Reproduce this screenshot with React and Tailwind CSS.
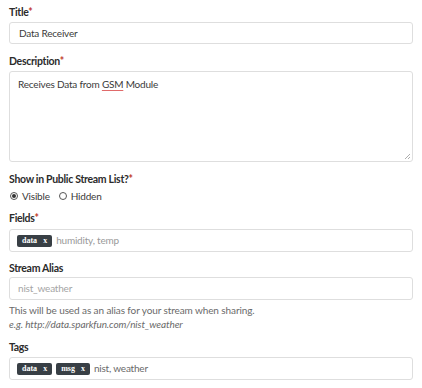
import React from 'react'

const sans = { fontFamily: 'Lato, "Liberation Sans", sans-serif' }

function Label({ children, required, className = '' }) {
  return (
    <div className={`h-4 leading-4 text-[10.5px] font-bold tracking-[-0.3px] text-[#2b2b2b] ${className}`}>
      {children}
      {required && <span className="text-[#c0392b]">*</span>}
    </div>
  )
}

function Chip({ text }) {
  return (
    <span
      className="inline-flex h-[12px] items-center gap-[6px] rounded-[2px] bg-[#383f45] px-[5px] text-[8px] font-bold leading-none tracking-normal text-white"
      style={{ fontFamily: '"Liberation Serif", serif' }}
    >
      {text}
      <span>x</span>
    </span>
  )
}

function Radio({ checked, label }) {
  return (
    <label className="flex items-center gap-[4px]">
      <span className="flex h-[8px] w-[8px] items-center justify-center rounded-full border border-[#555]">
        {checked && <span className="h-[4px] w-[4px] rounded-full bg-[#333]" />}
      </span>
      <span>{label}</span>
    </label>
  )
}

export default function App() {
  return (
    <div className="h-[388px] w-[422px] overflow-hidden bg-white px-[9px] pt-[4px] text-[10px] tracking-[-0.2px]" style={sans}>
      <Label required>Title</Label>
      <div className="mt-[2px] flex h-[22px] w-[404px] items-center rounded-[3px] border border-[#dedede] px-[9px] text-[#3a3a3a]">
        Data Receiver
      </div>

      <Label required className="mt-[9px]">Description</Label>
      <div className="relative mt-[2px] h-[91px] w-[404px] rounded-[3px] border border-[#dedede] px-[8px] pt-[5px] text-[#3a3a3a]">
        Receives Data from{' '}
        <span className="underline decoration-[#e06a6a] decoration-[1px] underline-offset-2">GSM</span>{' '}
        Module
        <svg className="absolute bottom-[1px] right-[1px]" width="7" height="7" viewBox="0 0 7 7">
          <path d="M6 1 L1 6 M6 4 L4 6" stroke="#999" strokeWidth="0.8" />
        </svg>
      </div>

      <Label required className="mt-[9px]">Show in Public Stream List?</Label>
      <div className="mt-[1px] flex h-4 items-center gap-[9px] pl-[1px] text-[#3a3a3a]">
        <Radio checked label="Visible" />
        <Radio label="Hidden" />
      </div>

      <Label required className="mt-[6px]">Fields</Label>
      <div className="mt-[3px] flex h-[23px] w-[404px] items-center gap-[4px] rounded-[3px] border border-[#dedede] px-[7px] text-[#9a9a9a]">
        <Chip text="data" />
        <span>humidity, temp</span>
      </div>

      <Label className="mt-[8px]">Stream Alias</Label>
      <div className="mt-[1px] flex h-[23px] w-[404px] items-center rounded-[3px] border border-[#dedede] px-[8px] text-[#a5a5a5]">
        nist_weather
      </div>
      <div className="mt-[3px] leading-[14px] tracking-[-0.1px] text-[#6a6a6a]">
        <div>This will be used as an alias for your stream when sharing.</div>
        <div className="italic">e.g. http://data.sparkfun.com/nist_weather</div>
      </div>

      <Label className="mt-[8px]">Tags</Label>
      <div className="mt-[2px] flex h-[23px] w-[404px] items-center gap-[4px] rounded-[3px] border border-[#dedede] px-[7px] text-[#6a6a6a]">
        <Chip text="data" />
        <Chip text="msg" />
        <span>nist, weather</span>
      </div>
    </div>
  )
}
